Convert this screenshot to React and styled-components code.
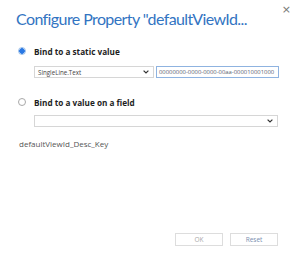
import React from "react";
import styled, { createGlobalStyle } from "styled-components";

const Global = createGlobalStyle`
  html, body { margin: 0; padding: 0; background: #ffffff; }
  body { font-family: "Open Sans", "Noto Sans", sans-serif; }
`;

const Dialog = styled.div`
  width: 300px;
  height: 249px;
  box-sizing: border-box;
  background: #ffffff;
  box-shadow: 0 2px 6px rgba(0, 0, 0, 0.12);
  display: flex;
  flex-direction: column;
`;

const Header = styled.div`
  display: flex;
  align-items: flex-start;
  justify-content: space-between;
  padding: 8px 9px 0 16px;
  height: 34px;
  box-sizing: border-box;
`;

const Title = styled.h1`
  margin: 0;
  font-family: "Lato", sans-serif;
  font-weight: 400;
  font-size: 16px;
  letter-spacing: -0.6px;
  line-height: 22px;
  color: #3274c2;
  white-space: nowrap;
`;

const Close = styled.button`
  border: 0;
  background: none;
  padding: 0;
  margin-top: -4px;
  font-size: 11px;
  line-height: 11px;
  color: #777777;
  font-family: "DejaVu Sans", sans-serif;
`;

const Body = styled.div`
  display: flex;
  flex-direction: column;
  padding: 0 0 0 18px;
  flex: 1;
`;

const RadioRow = styled.label`
  display: flex;
  align-items: center;
  gap: 8px;
  height: 14px;
  margin-top: ${(p) => p.$top}px;
`;

const RadioDot = styled.span`
  width: 8px;
  height: 8px;
  border-radius: 50%;
  box-sizing: border-box;
  border: 1px solid ${(p) => (p.$on ? "#9cc0ea" : "#a8a8a8")};
  background: ${(p) => (p.$on ? "radial-gradient(circle, #2a78e4 0 2.6px, #d9e8fa 3px)" : "#ffffff")};
`;

const RadioLabel = styled.span`
  font-family: "Open Sans", sans-serif;
  font-weight: 700;
  font-size: 8.2px;
  color: #1e1e1e;
`;

const FieldRow = styled.div`
  display: flex;
  margin: ${(p) => p.$top}px 0 0 16px;
  gap: 2px;
  width: ${(p) => p.$w}px;
`;

const Select = styled.div`
  flex: ${(p) => p.$flex || "none"};
  width: ${(p) => (p.$w ? p.$w + "px" : "auto")};
  height: 12px;
  box-sizing: border-box;
  border: 1px solid #d6d6d6;
  display: flex;
  align-items: center;
  justify-content: space-between;
  padding: 0 4px 0 3px;
  font-family: "Open Sans", sans-serif;
  font-size: 6.2px;
  color: #444444;
`;

const Chevron = styled.svg`
  width: 6px;
  height: 4px;
`;

const Input = styled.div`
  flex: 1;
  min-width: 0;
  height: 12px;
  box-sizing: border-box;
  border: 1px solid #8fb3e0;
  display: flex;
  align-items: center;
  padding: 0 2px;
  overflow: hidden;
  white-space: nowrap;
  font-family: "Open Sans", sans-serif;
  font-size: 5.9px;
  color: #5a6170;
`;

const Desc = styled.div`
  margin: 11px 0 0 1px;
  font-family: "Open Sans", sans-serif;
  font-size: 8px;
  color: #555555;
`;

const Footer = styled.div`
  display: flex;
  justify-content: flex-end;
  gap: 7px;
  padding: 0 22px 3px 0;
`;

const Button = styled.button`
  width: 48px;
  height: 13px;
  box-sizing: border-box;
  border: 1px solid #dddddd;
  background: #ffffff;
  padding: 0;
  font-family: "Open Sans", sans-serif;
  font-size: 6.5px;
  color: ${(p) => (p.$muted ? "#a9a9a9" : "#7b8fb0")};
`;

const ChevronIcon = () => (
  <Chevron viewBox="0 0 6 4">
    <path d="M0.6 0.6 L3 3 L5.4 0.6" fill="none" stroke="#333" strokeWidth="1.2" />
  </Chevron>
);

export default function App() {
  return (
    <>
      <Global />
      <Dialog>
        <Header>
          <Title>Configure Property "defaultViewId...</Title>
          <Close>×</Close>
        </Header>
        <Body>
          <RadioRow $top={10}>
            <RadioDot $on />
            <RadioLabel>Bind to a static value</RadioLabel>
          </RadioRow>
          <FieldRow $top={8} $w={245}>
            <Select $w={120}>
              <span>SingleLine.Text</span>
              <ChevronIcon />
            </Select>
            <Input>00000000-0000-0000-00aa-000010001000</Input>
          </FieldRow>
          <RadioRow $top={17}>
            <RadioDot />
            <RadioLabel>Bind to a value on a field</RadioLabel>
          </RadioRow>
          <FieldRow $top={6} $w={244}>
            <Select $flex="1">
              <span></span>
              <ChevronIcon />
            </Select>
          </FieldRow>
          <Desc>defaultViewId_Desc_Key</Desc>
        </Body>
        <Footer>
          <Button $muted>OK</Button>
          <Button>Reset</Button>
        </Footer>
      </Dialog>
    </>
  );
}
